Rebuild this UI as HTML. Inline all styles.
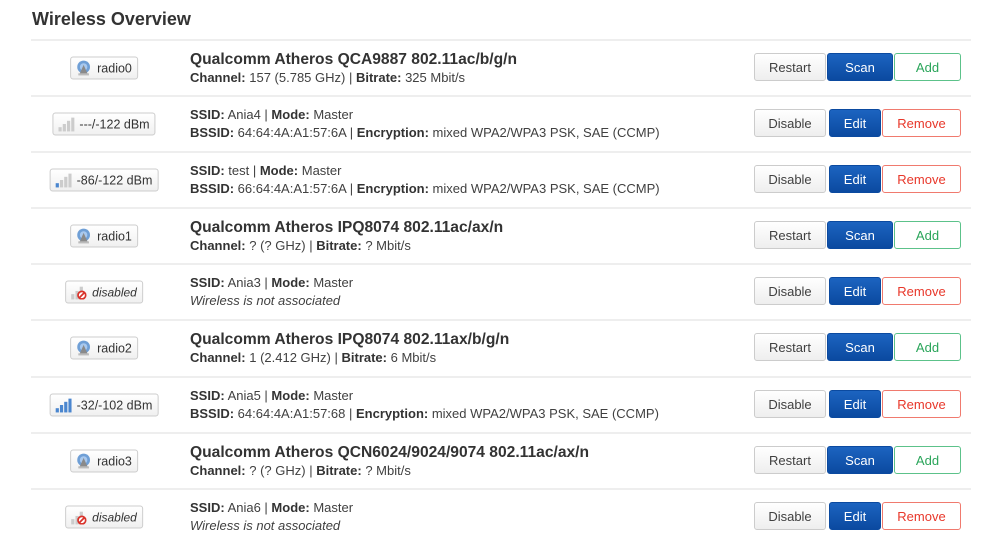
<!DOCTYPE html>
<html><head><meta charset="utf-8"><style>
body{margin:0;width:1007px;height:556px;background:#fff;font-family:"Liberation Sans",Arial,sans-serif;color:#404040;position:relative;overflow:hidden}
h2{position:absolute;left:32px;top:9px;margin:0;font-size:18px;font-weight:bold;color:#333}
.row{position:absolute;left:31px;width:940px;border-top:2px solid #eee;box-sizing:border-box}
.badge{position:absolute;top:50%;transform:translate(-50%,-50%);left:73px;height:23px;border:1px solid #ccc;border-radius:3px;background:linear-gradient(#fff,#f0f0f0);box-sizing:border-box;display:flex;align-items:center;padding:0 5px 0 4px;font-size:12.5px;white-space:nowrap;color:#333}
.badge svg{margin-right:5px}
.badge i{font-size:12px}
.txt{position:absolute;left:159px;font-size:13px;line-height:18px;white-space:nowrap}
.txt b{color:#333}
.name{font-size:15.6px;font-weight:bold;color:#333;line-height:18px}
.btn{position:absolute;height:28px;box-sizing:border-box;border-radius:3px;font-size:13px;display:flex;align-items:center;justify-content:center}
.def{border:1px solid #ccc;background:linear-gradient(#fff,#eee);color:#404040}
.pri{background:linear-gradient(#1c64c0,#0b4aa0);border:1px solid #0b4aa0;color:#fff}
.add{border:1px solid #5cc28a;color:#2aa55a;background:#fff}
.rem{border:1px solid #f07a6e;color:#e8372a;background:#fff}
</style></head><body>
<h2>Wireless Overview</h2>
<div id="c"></div>
<script>
var radio='<svg width="17" height="15" viewBox="0 0 16 14"><circle cx="8" cy="6" r="6" fill="#6f9fd6"/><circle cx="8" cy="6" r="3.5" fill="#a8c8ee"/><path d="M8 4 L4 13 H12 Z" fill="#8a8a8a"/><rect x="3" y="12" width="10" height="2" fill="#bbb"/></svg>';
function sig(n){var c=['#ccc','#ccc','#ccc','#ccc'];for(var i=0;i<n;i++)c[i]='#4a86cf';
return '<svg width="17" height="15" viewBox="0 0 16 14"><rect x="1" y="10" width="3" height="4" fill="'+c[0]+'"/><rect x="5" y="7" width="3" height="7" fill="'+c[1]+'"/><rect x="9" y="4" width="3" height="10" fill="'+c[2]+'"/><rect x="13" y="1" width="3" height="13" fill="'+c[3]+'"/></svg>';}
var dis='<svg width="17" height="15" viewBox="0 0 16 14"><rect x="1" y="9" width="3" height="5" fill="#ccc"/><rect x="5" y="6" width="3" height="8" fill="#ccc"/><rect x="9" y="2" width="3" height="8" fill="#ccc"/><circle cx="11" cy="10" r="3.6" fill="#fff" stroke="#d9322a" stroke-width="1.6"/><path d="M8.6 12.4 L13.4 7.6" stroke="#d9322a" stroke-width="1.6"/></svg>';
var rows=[
[39,'r',radio+'radio0','Qualcomm Atheros QCA9887 802.11ac/b/g/n','<b>Channel:</b> 157 (5.785 GHz) | <b>Bitrate:</b> 325 Mbit/s'],
[95,'n',sig(0)+'---/-122 dBm','<b>SSID:</b> Ania4 | <b>Mode:</b> Master','<b>BSSID:</b> 64:64:4A:A1:57:6A | <b>Encryption:</b> mixed WPA2/WPA3 PSK, SAE (CCMP)'],
[151,'n',sig(1)+'-86/-122 dBm','<b>SSID:</b> test | <b>Mode:</b> Master','<b>BSSID:</b> 66:64:4A:A1:57:6A | <b>Encryption:</b> mixed WPA2/WPA3 PSK, SAE (CCMP)'],
[207,'r',radio+'radio1','Qualcomm Atheros IPQ8074 802.11ac/ax/n','<b>Channel:</b> ? (? GHz) | <b>Bitrate:</b> ? Mbit/s'],
[263,'n',dis+'<i>disabled</i>','<b>SSID:</b> Ania3 | <b>Mode:</b> Master','<i>Wireless is not associated</i>'],
[319,'r',radio+'radio2','Qualcomm Atheros IPQ8074 802.11ax/b/g/n','<b>Channel:</b> 1 (2.412 GHz) | <b>Bitrate:</b> 6 Mbit/s'],
[376,'n',sig(4)+'-32/-102 dBm','<b>SSID:</b> Ania5 | <b>Mode:</b> Master','<b>BSSID:</b> 64:64:4A:A1:57:68 | <b>Encryption:</b> mixed WPA2/WPA3 PSK, SAE (CCMP)'],
[432,'r',radio+'radio3','Qualcomm Atheros QCN6024/9024/9074 802.11ac/ax/n','<b>Channel:</b> ? (? GHz) | <b>Bitrate:</b> ? Mbit/s'],
[488,'n',dis+'<i>disabled</i>','<b>SSID:</b> Ania6 | <b>Mode:</b> Master','<i>Wireless is not associated</i>']];
var h='';
rows.forEach(function(r){
var top=r[0],ht=56;
h+='<div class="row" style="top:'+top+'px;height:'+ht+'px"><div class="badge">'+r[2]+'</div>';
if(r[1]=='r'){
h+='<div class="txt" style="top:10px"><div class="name">'+r[3]+'</div><div>'+r[4]+'</div></div>';
h+='<div class="btn def" style="left:723px;top:12px;width:72px">Restart</div><div class="btn pri" style="left:796px;top:12px;width:66px">Scan</div><div class="btn add" style="left:863px;top:12px;width:67px">Add</div>';
}else{
h+='<div class="txt" style="top:9px"><div>'+r[3]+'</div><div>'+r[4]+'</div></div>';
h+='<div class="btn def" style="left:723px;top:12px;width:72px">Disable</div><div class="btn pri" style="left:798px;top:12px;width:52px">Edit</div><div class="btn rem" style="left:851px;top:12px;width:79px">Remove</div>';
}
h+='</div>';});
document.getElementById('c').innerHTML=h;
</script>
</body></html>
